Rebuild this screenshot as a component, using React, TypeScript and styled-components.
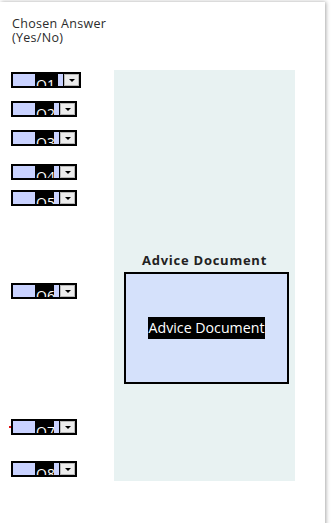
import React from "react";
import styled, { createGlobalStyle } from "styled-components";

const GlobalStyle = createGlobalStyle`
  html, body {
    margin: 0;
    padding: 0;
    background: #ffffff;
  }
  body {
    font-family: "Open Sans", "DejaVu Sans", sans-serif;
  }
`;

const Card = styled.div`
  margin-top: 2px;
  width: 325px;
  min-height: 530px;
  background: #ffffff;
  box-shadow: 1px 0 4px rgba(0, 0, 0, 0.35);
  padding: 15px 0 0 11px;
  box-sizing: border-box;
`;

const Caption = styled.div`
  font-size: 12.5px;
  line-height: 13.5px;
  color: #2b2b2b;
  letter-spacing: 0.3px;
  margin-left: 1px;
`;

const Body = styled.div`
  display: grid;
  grid-template-columns: 103px 181px;
  margin-top: 26px;
`;

const Questions = styled.div`
  display: flex;
  flex-direction: column;
  align-items: flex-start;
`;

const Select = styled.div<{ $top: number; $flag?: boolean }>`
  position: relative;
  margin-top: ${(p) => p.$top}px;
  height: 16px;
  background: #000000;
  padding: 2px;
  box-sizing: border-box;
  display: flex;
  align-items: stretch;

  &::before {
    content: ${(p) => (p.$flag ? '""' : "none")};
    position: absolute;
    left: -2px;
    top: 7px;
    width: 2px;
    height: 2px;
    background: #e01010;
  }
`;

const Swatch = styled.div<{ $w: number }>`
  width: ${(p) => p.$w}px;
  background: #c9d2ff;
`;

const Label = styled.div<{ $w: number }>`
  width: ${(p) => p.$w}px;
  overflow: hidden;
  color: #ffffff;
  font-size: 14px;
  line-height: 14px;
  padding: 4px 0 0 1px;
  box-sizing: border-box;
  white-space: nowrap;
`;

const DropButton = styled.div`
  width: 15px;
  margin-left: 1px;
  background: #ececec;
  border: 1px solid #b8b8b8;
  box-sizing: border-box;
  display: flex;
  align-items: center;
  justify-content: center;

  &::after {
    content: "";
    border-left: 3px solid transparent;
    border-right: 3px solid transparent;
    border-top: 3px solid #000000;
  }
`;

const Panel = styled.div`
  height: 411px;
  background: #e8f2f2;
  display: flex;
  flex-direction: column;
  align-items: center;
  padding: 182px 0 0 4px;
  box-sizing: border-box;
`;

const PanelTitle = styled.div`
  font-weight: 700;
  font-size: 13px;
  line-height: 16px;
  color: #222222;
  letter-spacing: 0.75px;
  margin-left: -4px;
`;

const DocBox = styled.div`
  margin-top: 4px;
  width: 165px;
  height: 112px;
  border: 2px solid #000000;
  background: #d5e1fb;
  box-sizing: border-box;
  display: flex;
  align-items: center;
  justify-content: center;
`;

const DocLabel = styled.span`
  background: #000000;
  color: #ffffff;
  font-size: 14.2px;
  line-height: 22px;
  padding: 0 1px;
`;

const questions = [
  { q: "Q1", top: 2, wide: true },
  { q: "Q2", top: 13 },
  { q: "Q3", top: 13 },
  { q: "Q4", top: 18 },
  { q: "Q5", top: 10 },
  { q: "Q6", top: 77 },
  { q: "Q7", top: 120, flag: true },
  { q: "Q8", top: 26 },
];

function App(): JSX.Element {
  return (
    <>
      <GlobalStyle />
      <Card>
        <Caption>
          Chosen Answer
          <br />
          (Yes/No)
        </Caption>
        <Body>
          <Questions>
            {questions.map((item) => (
              <Select key={item.q} $top={item.top} $flag={item.flag}>
                <Swatch $w={22} />
                <Label $w={item.wide ? 23 : 19}>{item.q}</Label>
                <Swatch $w={5} />
                <DropButton />
              </Select>
            ))}
          </Questions>
          <Panel>
            <PanelTitle>Advice Document</PanelTitle>
            <DocBox>
              <DocLabel>Advice Document</DocLabel>
            </DocBox>
          </Panel>
        </Body>
      </Card>
    </>
  );
}

export default App;
